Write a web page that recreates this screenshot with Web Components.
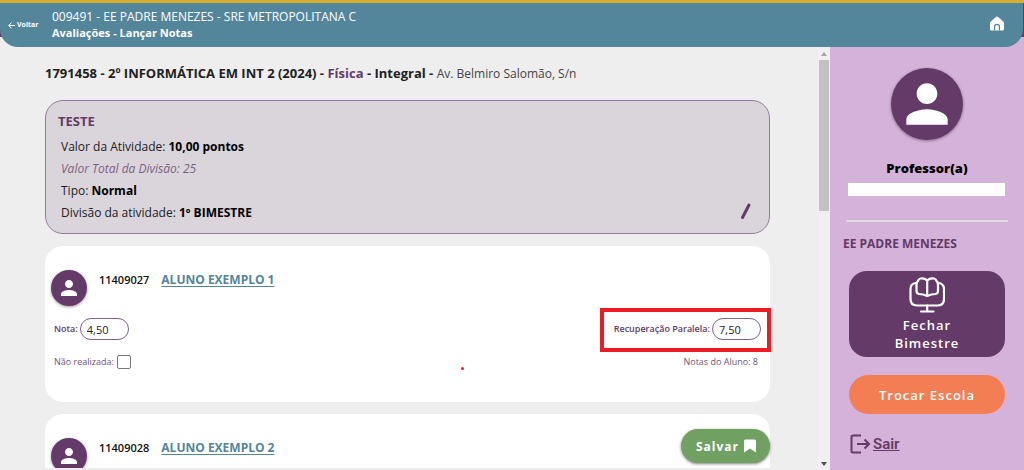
<!DOCTYPE html>
<html lang="pt-BR">
<head>
<meta charset="utf-8">
<meta name="viewport" content="width=device-width, initial-scale=1">
<title>Avaliações - Lançar Notas</title>
<style>
    html, body {
        margin: 0;
        height: 100%;
    }

    body {
        --roxo: #643a68;
        --azul: #53859b;
        --lilas: #d4b2d9;
        --cinza: #eeeeee;
        --verde: #71a162;
        --laranja: #f47e53;
        font-family: "Open Sans", "Noto Sans", sans-serif;
        font-size: 12px;
        line-height: 16px;
        color: #212121;
        background: var(--cinza);
        overflow: hidden;
    }
</style>
</head>
<body>

<diario-app>
    <diario-header slot="header" escola="009491 - EE PADRE MENEZES - SRE METROPOLITANA C" tela="Avaliações - Lançar Notas"></diario-header>

    <turma-titulo>
        1791458 - 2º INFORMÁTICA EM INT 2 (2024) -
        <span slot="disciplina">Física</span>
        <span slot="turno">- Integral -</span>
        <span slot="endereco">Av. Belmiro Salomão, S/n</span>
    </turma-titulo>
    <atividade-card nome="TESTE" valor="10,00 pontos" total="25" tipo="Normal" divisao="1º BIMESTRE"></atividade-card>
    <aluno-card matricula="11409027" nome="ALUNO EXEMPLO 1" nota="4,50" recuperacao="7,50" total="8" destaque></aluno-card>
    <aluno-card matricula="11409028" nome="ALUNO EXEMPLO 2"></aluno-card>

    <salvar-button slot="acao">Salvar</salvar-button>
    <perfil-sidebar slot="sidebar" escola="EE PADRE MENEZES">Professor(a)</perfil-sidebar>
</diario-app>

<script>
const ICON_PESSOA = '<path fill="#fff" d="M12 12c2.2 0 4-1.8 4-4s-1.8-4-4-4-4 1.800-4 4 1.800 4 4 4zm0 2c-2.700 0-8 1.300-8 4v2h16v-2c0-2.700-5.300-4-8-4z"/>';

customElements.define('diario-app', class extends HTMLElement {
    constructor() {
        super();
        this.attachShadow({ mode: 'open' }).innerHTML = `
            <style>
                :host {
                    display: flex;
                    flex-direction: column;
                    height: 100vh;
                }
                .corpo {
                    flex: 1;
                    min-height: 0;
                    display: flex;
                }
                .painel {
                    flex: 1;
                    min-width: 0;
                    position: relative;
                    display: flex;
                    padding-bottom: 2px;
                }
                main {
                    flex: 1;
                    min-width: 0;
                    box-sizing: border-box;
                    display: flex;
                    flex-direction: column;
                    gap: 12px;
                    padding: 16px 48px 0 45px;
                    overflow: hidden;
                }
                /* floating action over the list */
                ::slotted([slot="acao"]) {
                    position: absolute;
                    right: 60px;
                    bottom: 7px;
                }
            </style>
            <slot name="header"></slot>
            <div class="corpo">
                <div class="painel">
                    <main><slot></slot></main>
                    <barra-rolagem></barra-rolagem>
                    <slot name="acao"></slot>
                </div>
                <slot name="sidebar"></slot>
            </div>
        `;
    }
});

customElements.define('diario-header', class extends HTMLElement {
    constructor() {
        super();
        this.attachShadow({ mode: 'open' }).innerHTML = `
            <style>
                :host {
                    display: block;
                    border-top: 3px solid #d6ae30;
                    padding: 0 1px 0 0;
                    background:
                        linear-gradient(var(--roxo) 34px, transparent 34px),
                        linear-gradient(to left, var(--lilas) 194px, var(--cinza) 194px);
                }
                header {
                    display: flex;
                    align-items: center;
                    height: 44px;
                    box-sizing: border-box;
                    padding: 0 18px 0 8px;
                    border-radius: 0 0 18px 18px;
                    background: var(--azul);
                    color: #fff;
                }
                .voltar {
                    display: flex;
                    align-items: center;
                    gap: 2px;
                    width: 44px;
                    font-size: 7px;
                    font-weight: 700;
                    color: inherit;
                    text-decoration: none;
                }
                .titulos {
                    flex: 1;
                }
                .titulos div, h1 {
                    margin: 0;
                    font-size: 12px;
                    line-height: 16px;
                }
                h1 {
                    font-size: 11px;
                    font-weight: 700;
                }
                svg {
                    display: block;
                }
            </style>
            <header>
                <a class="voltar" href="#">
                    <svg width="7" height="7" viewBox="0 0 7 7" fill="none" stroke="#fff" stroke-width="1"><path d="M7 3.500H.8M3.500.6L.7 3.500l2.800 2.900"/></svg>
                    Voltar
                </a>
                <div class="titulos">
                    <div>${this.getAttribute('escola')}</div>
                    <h1>${this.getAttribute('tela')}</h1>
                </div>
                <a href="#" aria-label="Início">
                    <svg width="16" height="20" viewBox="0 0 16 20">
                        <path fill="#fff" d="M6.600 2.200Q8 .8 9.400 2.200L14.200 6.400Q15 7.100 15 8.200V14Q15 15.500 13.500 15.500H2.500Q1 15.500 1 14V8.200Q1 7.100 1.800 6.400z"/>
                        <path fill="none" stroke="#53859b" stroke-width="1.200" d="M5.600 15.500V11.500Q5.600 9.400 8 9.400T10.400 11.500V15.500"/>
                    </svg>
                </a>
            </header>
        `;
    }
});

customElements.define('barra-rolagem', class extends HTMLElement {
    constructor() {
        super();
        this.attachShadow({ mode: 'open' }).innerHTML = `
            <style>
                :host {
                    display: flex;
                    flex-direction: column;
                    width: 12px;
                    box-sizing: border-box;
                    padding: 5px 1px 2px;
                    background: #f0f0f0;
                }
                svg {
                    display: block;
                    align-self: center;
                }
                .trilho {
                    flex: 1;
                    padding: 4px 0;
                }
                .polegar {
                    height: 38%;
                    background: #c1c1c1;
                }
            </style>
            <svg width="6" height="4" viewBox="0 0 6 4"><path fill="#a3a3a3" d="M0 4L3 0l3 4z"/></svg>
            <div class="trilho"><div class="polegar"></div></div>
            <svg width="6" height="4" viewBox="0 0 6 4"><path fill="#505050" d="M0 0L3 4l3-4z"/></svg>
        `;
    }
});

customElements.define('turma-titulo', class extends HTMLElement {
    constructor() {
        super();
        this.attachShadow({ mode: 'open' }).innerHTML = `
            <style>
                :host {
                    display: block;
                    margin-bottom: 4px;
                }
                h2 {
                    margin: 0;
                    font-size: 13px;
                    line-height: 20px;
                    font-weight: 700;
                }
                ::slotted([slot="disciplina"]) {
                    color: var(--roxo);
                }
                ::slotted([slot="endereco"]) {
                    font-size: 12px;
                    font-weight: 400;
                    color: #444;
                }
            </style>
            <h2><slot></slot> <slot name="disciplina"></slot> <slot name="turno"></slot> <slot name="endereco"></slot></h2>
        `;
    }
});

customElements.define('atividade-card', class extends HTMLElement {
    constructor() {
        super();
        this.attachShadow({ mode: 'open' }).innerHTML = `
            <style>
                :host {
                    display: flex;
                    align-items: flex-end;
                    justify-content: space-between;
                    flex-shrink: 0;
                    padding: 11px 17px 9px 12px;
                    border: 1px solid #9579a0;
                    border-radius: 18px;
                    background: #dad5da;
                }
                h3 {
                    margin: 0 0 6px;
                    font-size: 13px;
                    line-height: 18px;
                    color: var(--roxo);
                }
                p {
                    margin: 0 0 0 3px;
                    font-size: 12px;
                    line-height: 22px;
                }
                b {
                    color: #000;
                }
                .total {
                    font-style: italic;
                    color: #7d5f85;
                }
                button {
                    display: block;
                    margin-bottom: 4px;
                    padding: 0;
                    border: 0;
                    background: none;
                }
                svg {
                    display: block;
                }
            </style>
            <div>
                <h3>${this.getAttribute('nome')}</h3>
                <p>Valor da Atividade: <b>${this.getAttribute('valor')}</b></p>
                <p class="total">Valor Total da Divisão: ${this.getAttribute('total')}</p>
                <p>Tipo: <b>${this.getAttribute('tipo')}</b></p>
                <p>Divisão da atividade: <b>${this.getAttribute('divisao')}</b></p>
            </div>
            <button aria-label="Editar">
                <svg width="12" height="18" viewBox="0 0 12 18"><path stroke="#643a68" stroke-width="3" stroke-linecap="round" d="M2.500 15.500L9 3"/></svg>
            </button>
        `;
    }
});

customElements.define('aluno-card', class extends HTMLElement {
    constructor() {
        super();
        this.attachShadow({ mode: 'open' }).innerHTML = `
            <style>
                :host {
                    display: block;
                    position: relative;
                    flex-shrink: 0;
                    min-height: 156px;
                    box-sizing: border-box;
                    padding: 24px 9px 24px 6px;
                    border-radius: 18px;
                    background: #fff;
                }
                .aluno {
                    display: flex;
                    gap: 12px;
                }
                .avatar {
                    display: flex;
                    align-items: center;
                    justify-content: center;
                    width: 36px;
                    height: 36px;
                    border-radius: 50%;
                    background: var(--roxo);
                    box-shadow: 0 1px 3px rgba(0, 0, 0, 0.4);
                }
                .matricula {
                    line-height: 20px;
                    font-size: 11px;
                    font-weight: 600;
                    color: #111;
                }
                .nome {
                    line-height: 20px;
                    font-weight: 700;
                    color: var(--azul);
                    text-underline-offset: 2px;
                }
                .linha {
                    display: flex;
                    justify-content: space-between;
                    margin: 12px 0 0 3px;
                    font-size: 9px;
                    color: #6f5277;
                }
                .linha + .linha {
                    margin-top: 14px;
                    margin-right: 3px;
                }
                label {
                    position: relative;
                    display: flex;
                    align-items: center;
                    gap: 3px;
                }
                .campo {
                    gap: 2px;
                    color: var(--roxo);
                    font-weight: 600;
                }
                input[type="text"] {
                    width: 49px;
                    height: 22px;
                    box-sizing: border-box;
                    padding: 0 6px;
                    border: 1px solid #82608a;
                    border-radius: 11px;
                    background: #fff;
                    color: #222;
                    font: 11px "Open Sans", "Noto Sans", sans-serif;
                }
                input[type="checkbox"] {
                    appearance: none;
                    width: 14px;
                    height: 14px;
                    box-sizing: border-box;
                    margin: 0;
                    border: 1px solid #777;
                    border-radius: 2px;
                    background: #fff;
                }
                /* callout frame around the recovery grade */
                .destaque::after {
                    content: "";
                    position: absolute;
                    inset: -10px -10px -12px -14px;
                    border: 4px solid #ed1c24;
                    pointer-events: none;
                }
                .ponto {
                    position: absolute;
                    left: calc(50% + 53px);
                    top: 121px;
                    width: 3px;
                    height: 3px;
                    border-radius: 50%;
                    background: #ed1c24;
                }
            </style>
            <div class="aluno">
                <div class="avatar"><svg width="24" height="24" viewBox="0 0 24 24">${ICON_PESSOA}</svg></div>
                <span class="matricula">${this.getAttribute('matricula')}</span>
                <a class="nome" href="#">${this.getAttribute('nome')}</a>
            </div>
            ${this.hasAttribute('nota') ? this.notas() : ''}
        `;
    }

    notas() {
        const destaque = this.hasAttribute('destaque');
        return `
            <div class="linha">
                <label class="campo">Nota: <input type="text" value="${this.getAttribute('nota')}"></label>
                <label class="campo ${destaque ? 'destaque' : ''}">Recuperação Paralela: <input type="text" value="${this.getAttribute('recuperacao')}"></label>
            </div>
            <div class="linha">
                <label>Não realizada: <input type="checkbox"></label>
                <span>Notas do Aluno: ${this.getAttribute('total')}</span>
            </div>
            ${destaque ? '<i class="ponto"></i>' : ''}
        `;
    }
});

customElements.define('salvar-button', class extends HTMLElement {
    constructor() {
        super();
        this.attachShadow({ mode: 'open' }).innerHTML = `
            <style>
                :host {
                    display: block;
                }
                button {
                    display: flex;
                    align-items: center;
                    gap: 5px;
                    height: 34px;
                    padding: 0 14px 0 15px;
                    border: 0;
                    border-radius: 17px;
                    background: var(--verde);
                    box-shadow: 0 1px 3px rgba(0, 0, 0, 0.5);
                    color: #fff;
                    font: 700 12px "Open Sans", "Noto Sans", sans-serif;
                    letter-spacing: 1px;
                }
            </style>
            <button>
                <slot></slot>
                <svg width="12" height="14" viewBox="0 0 12 14"><path fill="#fff" d="M1.500 0.500h9Q12 .5 12 2v11.500L6 9.500 0 13.500V2Q0 .5 1.500.5z"/></svg>
            </button>
        `;
    }
});

customElements.define('perfil-sidebar', class extends HTMLElement {
    constructor() {
        super();
        this.attachShadow({ mode: 'open' }).innerHTML = `
            <style>
                :host {
                    display: flex;
                    flex-direction: column;
                    width: 194px;
                    box-sizing: border-box;
                    padding: 21px 16px 0;
                    background: var(--lilas);
                }
                .avatar {
                    align-self: center;
                    display: flex;
                    align-items: center;
                    justify-content: center;
                    width: 72px;
                    height: 72px;
                    border-radius: 50%;
                    background: var(--roxo);
                    box-shadow: 0 1px 3px rgba(0, 0, 0, 0.4);
                }
                .nome {
                    margin-top: 19px;
                    text-align: center;
                    font-size: 13px;
                    line-height: 18px;
                    font-weight: 800;
                    color: #000;
                }
                .tarja {
                    height: 13px;
                    margin: 6px 3px 0 2px;
                    background: #fff;
                }
                hr {
                    width: 100%;
                    height: 2px;
                    margin: 24px 0 14px;
                    border: 0;
                    background: #dcdcdc;
                }
                h4 {
                    margin: 0 0 19px -3px;
                    font-size: 12px;
                    line-height: 16px;
                    color: var(--roxo);
                }
                button {
                    display: flex;
                    flex-direction: column;
                    align-items: center;
                    justify-content: center;
                    gap: 3px;
                    margin: 0 3px 18px;
                    border: 0;
                    color: #fff;
                    font: 600 13px/18px "Open Sans", "Noto Sans", sans-serif;
                    letter-spacing: 1px;
                }
                .fechar {
                    height: 86px;
                    padding: 0 40px;
                    border-radius: 18px;
                    background: var(--roxo);
                }
                .trocar {
                    height: 39px;
                    border-radius: 20px;
                    background: var(--laranja);
                }
                .sair {
                    align-self: flex-start;
                    display: flex;
                    align-items: center;
                    gap: 2px;
                    margin: 2px 4px 0;
                    font: 600 15px/20px Roboto, sans-serif;
                    color: var(--roxo);
                }
            </style>
            <div class="avatar">
                <svg width="62" height="62" viewBox="0 0 24 24">${ICON_PESSOA}</svg>
            </div>
            <div class="nome"><slot></slot></div>
            <div class="tarja"></div>
            <hr>
            <h4>${this.getAttribute('escola')}</h4>
            <button class="fechar">
                <svg width="36" height="36" viewBox="0 0 36 36" fill="none" stroke="#fff" stroke-width="2.200" stroke-linecap="round" stroke-linejoin="round">
                    <path d="M6.500 6Q1.500 7 1.500 12V22Q1.500 28.500 8 28.500H28.500Q35 28.500 35 22V12Q35 7 30 6"/>
                    <path d="M18.200 3.500Q15.500 .8 11.500 1.500Q9.500 2 9 4Q7.500 5 7.500 7.500V14Q7.500 16.500 10 17Q14 17 18.200 19Q22.400 17 26.500 17Q29 16.500 29 14V7.500Q29 5 27.500 4Q27 2 25 1.500Q21 .8 18.200 3.500V19M18.200 28.500V34M12 34.500H24.500"/>
                </svg>
                <span>Fechar Bimestre</span>
            </button>
            <button class="trocar">Trocar Escola</button>
            <a class="sair" href="#">
                <svg width="21" height="20" viewBox="0 0 21 20" fill="none" stroke="#643a68" stroke-width="2"><path d="M11 1.500H3Q1.500 1.500 1.500 3V17Q1.500 18.500 3 18.500H11M7 10H19M14.500 5.500L19 10l-4.500 4.500"/></svg>
                Sair
            </a>
        `;
    }
});
</script>
</body>
</html>
